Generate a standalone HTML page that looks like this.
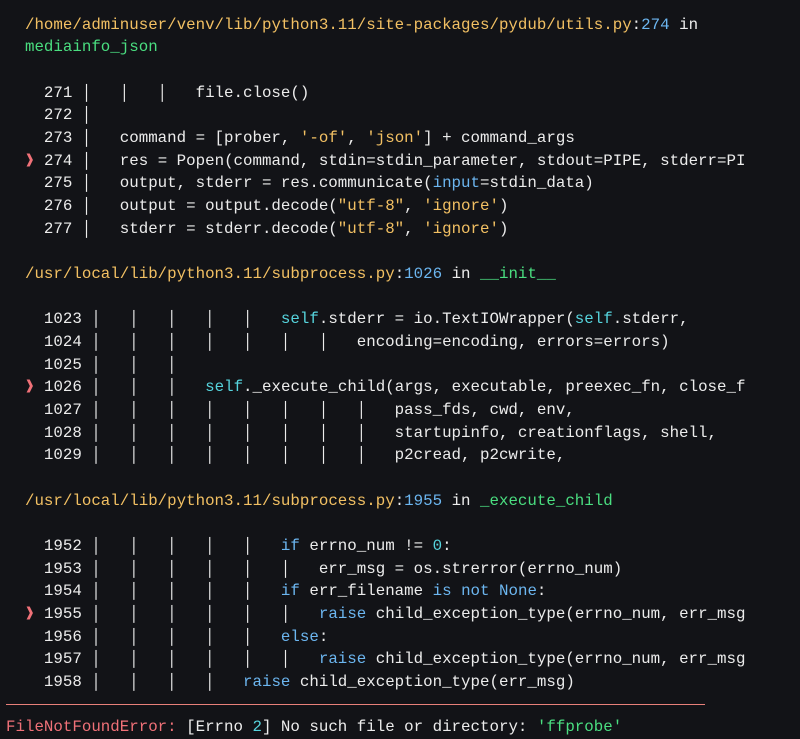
<!DOCTYPE html>
<html><head><meta charset="utf-8"><style>
html,body{margin:0;padding:0;background:#121317;width:800px;height:736px;overflow:hidden}
pre{margin:0;position:absolute;left:6px;top:13.5px;font-family:"Liberation Mono","DejaVu Sans Mono",monospace;font-size:15.8px;line-height:22.67px;color:#ececec;white-space:pre}
.y{color:#f2c063}.g{color:#4ade80}.b{color:#6cb6f0}.s{color:#f2c063}.r{color:#f07178}.c{color:#56d4dd}.k{color:#6cb6f0}
.rule{position:absolute;left:6px;top:704px;width:699px;height:1px;background:#e8807a}
</style></head><body>
<pre>  <span class="y">/home/adminuser/venv/lib/python3.11/site-packages/pydub/utils.py</span>:<span class="b">274</span> in
  <span class="g">mediainfo_json</span>

    271 │   │   │   file.close()
    272 │
    273 │   command = [prober, <span class="s">'-of'</span>, <span class="s">'json'</span>] + command_args
  <span class="r">❱</span> 274 │   res = Popen(command, stdin=stdin_parameter, stdout=PIPE, stderr=PI
    275 │   output, stderr = res.communicate(<span class="k">input</span>=stdin_data)
    276 │   output = output.decode(<span class="s">"utf-8"</span>, <span class="s">'ignore'</span>)
    277 │   stderr = stderr.decode(<span class="s">"utf-8"</span>, <span class="s">'ignore'</span>)

  <span class="y">/usr/local/lib/python3.11/subprocess.py</span>:<span class="b">1026</span> in <span class="g">__init__</span>

    1023 │   │   │   │   │   <span class="c">self</span>.stderr = io.TextIOWrapper(<span class="c">self</span>.stderr,
    1024 │   │   │   │   │   │   │   encoding=encoding, errors=errors)
    1025 │   │   │
  <span class="r">❱</span> 1026 │   │   │   <span class="c">self</span>._execute_child(args, executable, preexec_fn, close_f
    1027 │   │   │   │   │   │   │   │   pass_fds, cwd, env,
    1028 │   │   │   │   │   │   │   │   startupinfo, creationflags, shell,
    1029 │   │   │   │   │   │   │   │   p2cread, p2cwrite,

  <span class="y">/usr/local/lib/python3.11/subprocess.py</span>:<span class="b">1955</span> in <span class="g">_execute_child</span>

    1952 │   │   │   │   │   <span class="k">if</span> errno_num != <span class="c">0</span>:
    1953 │   │   │   │   │   │   err_msg = os.strerror(errno_num)
    1954 │   │   │   │   │   <span class="k">if</span> err_filename <span class="k">is</span> <span class="k">not</span> <span class="k">None</span>:
  <span class="r">❱</span> 1955 │   │   │   │   │   │   <span class="k">raise</span> child_exception_type(errno_num, err_msg
    1956 │   │   │   │   │   <span class="k">else</span>:
    1957 │   │   │   │   │   │   <span class="k">raise</span> child_exception_type(errno_num, err_msg
    1958 │   │   │   │   <span class="k">raise</span> child_exception_type(err_msg)

<span class="r">FileNotFoundError:</span> [Errno <span class="c">2</span>] No such file or directory: <span class="g">'ffprobe'</span></pre>
<div class="rule"></div>
</body></html>
